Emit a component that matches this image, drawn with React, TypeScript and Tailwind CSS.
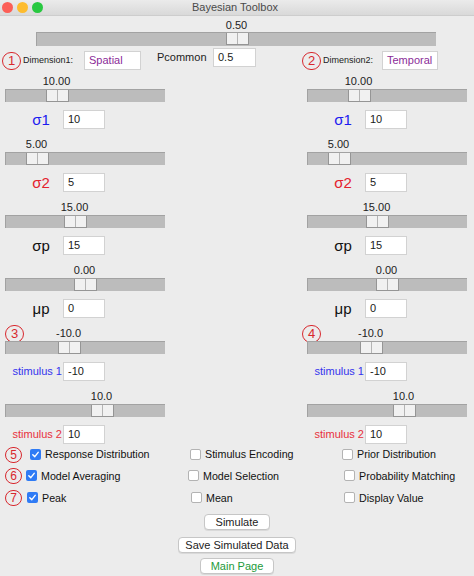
import React from "react"

type Group = {
  value: string
  pos: number
  name: string
  entry: string
  labelClass: string
}

const groups: Group[] = [
  { value: "10.00", pos: 40, name: "σ1", entry: "10", labelClass: "pl-[14px] justify-center text-[15px] text-[#1c1cf0]" },
  { value: "5.00", pos: 20, name: "σ2", entry: "5", labelClass: "pl-[14px] justify-center text-[15px] text-[#e4222e]" },
  { value: "15.00", pos: 58, name: "σp", entry: "15", labelClass: "pl-[14px] justify-center text-[15px] text-[#111]" },
  { value: "0.00", pos: 68, name: "μp", entry: "0", labelClass: "pl-[14px] justify-center text-[15px] text-[#111]" },
  { value: "-10.0", pos: 52, name: "stimulus 1", entry: "-10", labelClass: "justify-end pr-[1px] text-[11px] text-[#3434ee]" },
  { value: "10.0", pos: 85, name: "stimulus 2", entry: "10", labelClass: "justify-end pr-[1px] text-[11px] text-[#e8303c]" },
]

function Num({ n, className = "" }: { n: string; className?: string }) {
  return (
    <div
      className={`flex shrink-0 items-center justify-center rounded-full border border-[#d8282e] leading-none text-[#d8282e] ${className}`}
    >
      {n}
    </div>
  )
}

function Entry({ children, className = "" }: { children: React.ReactNode; className?: string }) {
  return (
    <div
      className={`flex h-[19px] shrink-0 items-center border border-[#d2d2d2] bg-white pl-[4px] text-[11px] ${className}`}
    >
      {children}
    </div>
  )
}

function Thumb({ pos }: { pos: number }) {
  return (
    <div
      className="absolute top-0 flex h-[12px] w-[23px] border-x border-b border-[#959595] bg-[#f1f1f1]"
      style={{ left: pos }}
    >
      <div className="h-full flex-1 border-r border-[#b4b4b4]" />
      <div className="h-full flex-1" />
    </div>
  )
}

function Track({ pos, className = "" }: { pos: number; className?: string }) {
  return (
    <div className={`relative border-l border-t border-[#a2a2a2] bg-[#bcbcbc] ${className}`}>
      <Thumb pos={pos} />
    </div>
  )
}

function Check({ label, checked }: { label: string; checked?: boolean }) {
  return (
    <div className="flex items-center gap-[4px]">
      {checked ? (
        <div className="flex h-[11px] w-[11px] items-center justify-center rounded-[2px] bg-[#2f7bf5]">
          <svg viewBox="0 0 10 10" className="h-[9px] w-[9px]">
            <polyline points="2,5.2 4.2,7.4 8,2.6" fill="none" stroke="white" strokeWidth="1.6" strokeLinecap="round" strokeLinejoin="round" />
          </svg>
        </div>
      ) : (
        <div className="h-[11px] w-[11px] rounded-[2px] border border-[#b3b3b3] bg-white" />
      )}
      <span className="whitespace-nowrap text-[10.7px] text-[#111]">{label}</span>
    </div>
  )
}

function Column({ className, mark, markSpace }: { className: string; mark: React.ReactNode; markSpace: number }) {
  return (
    <div className={`flex w-[160px] flex-col gap-[8px] ${className}`}>
      {groups.map((g, i) => (
        <div key={g.value + i} className="flex flex-col">
          <div className="flex h-[15px] items-center">
            {i === 4 && mark}
            <div
              className="flex w-[23px] shrink-0 justify-center whitespace-nowrap text-[11px] text-[#222]"
              style={{ marginLeft: i === 4 ? g.pos - markSpace : g.pos }}
            >
              {g.value}
            </div>
          </div>
          <Track pos={g.pos} className="h-[13px]" />
          <div className="mt-[8px] flex h-[19px] items-center">
            <div className={`flex w-[58px] shrink-0 whitespace-nowrap leading-none ${g.labelClass}`}>{g.name}</div>
            <Entry className="w-[42px] text-[#1a1a1a]">{g.entry}</Entry>
          </div>
        </div>
      ))}
    </div>
  )
}

function Btn({ children, className = "" }: { children: React.ReactNode; className?: string }) {
  return (
    <div
      className={`flex h-[16px] items-center justify-center rounded-[4px] border border-[#c6c6c6] bg-white text-[11px] shadow-[0_1px_0_rgba(0,0,0,0.08)] ${className}`}
    >
      {children}
    </div>
  )
}

export default function App() {
  return (
    <div className="h-[576px] w-[474px] overflow-hidden bg-[#ececec] font-['Liberation_Sans',Arial,sans-serif] text-[#1e1e1e]">
      {/* title bar */}
      <div className="relative flex h-[16px] items-center border-b border-[#cdcdcd] bg-gradient-to-b from-[#ebebeb] to-[#d9d9d9]">
        <div className="flex gap-[4px] pl-[2px]">
          <div className="h-[11px] w-[11px] rounded-full bg-[#fc5f57]" />
          <div className="h-[11px] w-[11px] rounded-full bg-[#fdbc2e]" />
          <div className="h-[11px] w-[11px] rounded-full bg-[#28c840]" />
        </div>
        <div className="flex-1 pr-[47px] text-center text-[11px] text-[#4a4a4a]">Bayesian Toolbox</div>
      </div>

      {/* Pcommon slider */}
      <div className="ml-[36px] mt-[2px] w-[400px]">
        <div className="flex h-[14px] items-center">
          <div className="ml-[189px] flex w-[23px] justify-center text-[11px] text-[#222]">0.50</div>
        </div>
        <Track pos={189} className="h-[14px]" />
      </div>

      {/* dimensions */}
      <div className="flex h-[28px]">
        <div className="ml-[2px] mt-[5px] flex h-[19px] items-center">
          <Num n="1" className="h-[18px] w-[19px] text-[13px]" />
          <span className="ml-[2px] w-[61px] text-[9px] text-[#222]">Dimension1:</span>
          <Entry className="w-[57px] text-[#8b2c98]">Spatial</Entry>
        </div>
        <div className="ml-[16px] mt-[2px] flex h-[19px] items-center">
          <span className="w-[56px] text-[11px] text-[#222]">Pcommon</span>
          <Entry className="w-[43px] text-[#1a1a1a]">0.5</Entry>
        </div>
        <div className="ml-[46px] mt-[5px] flex h-[19px] items-center">
          <Num n="2" className="h-[18px] w-[19px] text-[13px]" />
          <span className="ml-[2px] w-[59px] text-[9px] text-[#222]">Dimension2:</span>
          <Entry className="w-[56px] text-[#8b2c98]">Temporal</Entry>
        </div>
      </div>

      {/* two parameter columns */}
      <div className="flex">
        <Column className="ml-[5px]" mark={<Num n="3" className="h-[18px] w-[19px] text-[13px]" />} markSpace={19} />
        <Column className="ml-[142px]" mark={<Num n="4" className="-ml-[5px] h-[18px] w-[19px] text-[13px]" />} markSpace={14} />
      </div>

      {/* options */}
      <div className="flex h-[21px] items-center">
        <Num n="5" className="ml-[5px] h-[16px] w-[17px] text-[12px]" />
        <div className="w-[160px] pl-[8px]"><Check label="Response Distribution" checked /></div>
        <div className="w-[150px] pl-[8px]"><Check label="Stimulus Encoding" /></div>
        <div className="pl-[10px]"><Check label="Prior Distribution" /></div>
      </div>
      <div className="flex h-[22px] items-center">
        <Num n="6" className="ml-[5px] h-[16px] w-[17px] text-[12px]" />
        <div className="w-[160px] pl-[4px]"><Check label="Model Averaging" checked /></div>
        <div className="w-[150px] pl-[6px]"><Check label="Model Selection" /></div>
        <div className="pl-[12px]"><Check label="Probability Matching" /></div>
      </div>
      <div className="flex h-[22px] items-center">
        <Num n="7" className="ml-[5px] h-[16px] w-[17px] text-[12px]" />
        <div className="w-[160px] pl-[5px]"><Check label="Peak" checked /></div>
        <div className="w-[150px] pl-[9px]"><Check label="Mean" /></div>
        <div className="pl-[12px]"><Check label="Display Value" /></div>
      </div>

      {/* actions */}
      <div className="mt-[5px] flex flex-col items-center">
        <Btn className="w-[66px] text-[#222]">Simulate</Btn>
        <Btn className="mt-[7px] w-[118px] text-[#222]">Save Simulated Data</Btn>
        <Btn className="mt-[5px] w-[74px] text-[#239a3a]">Main Page</Btn>
      </div>
    </div>
  )
}
